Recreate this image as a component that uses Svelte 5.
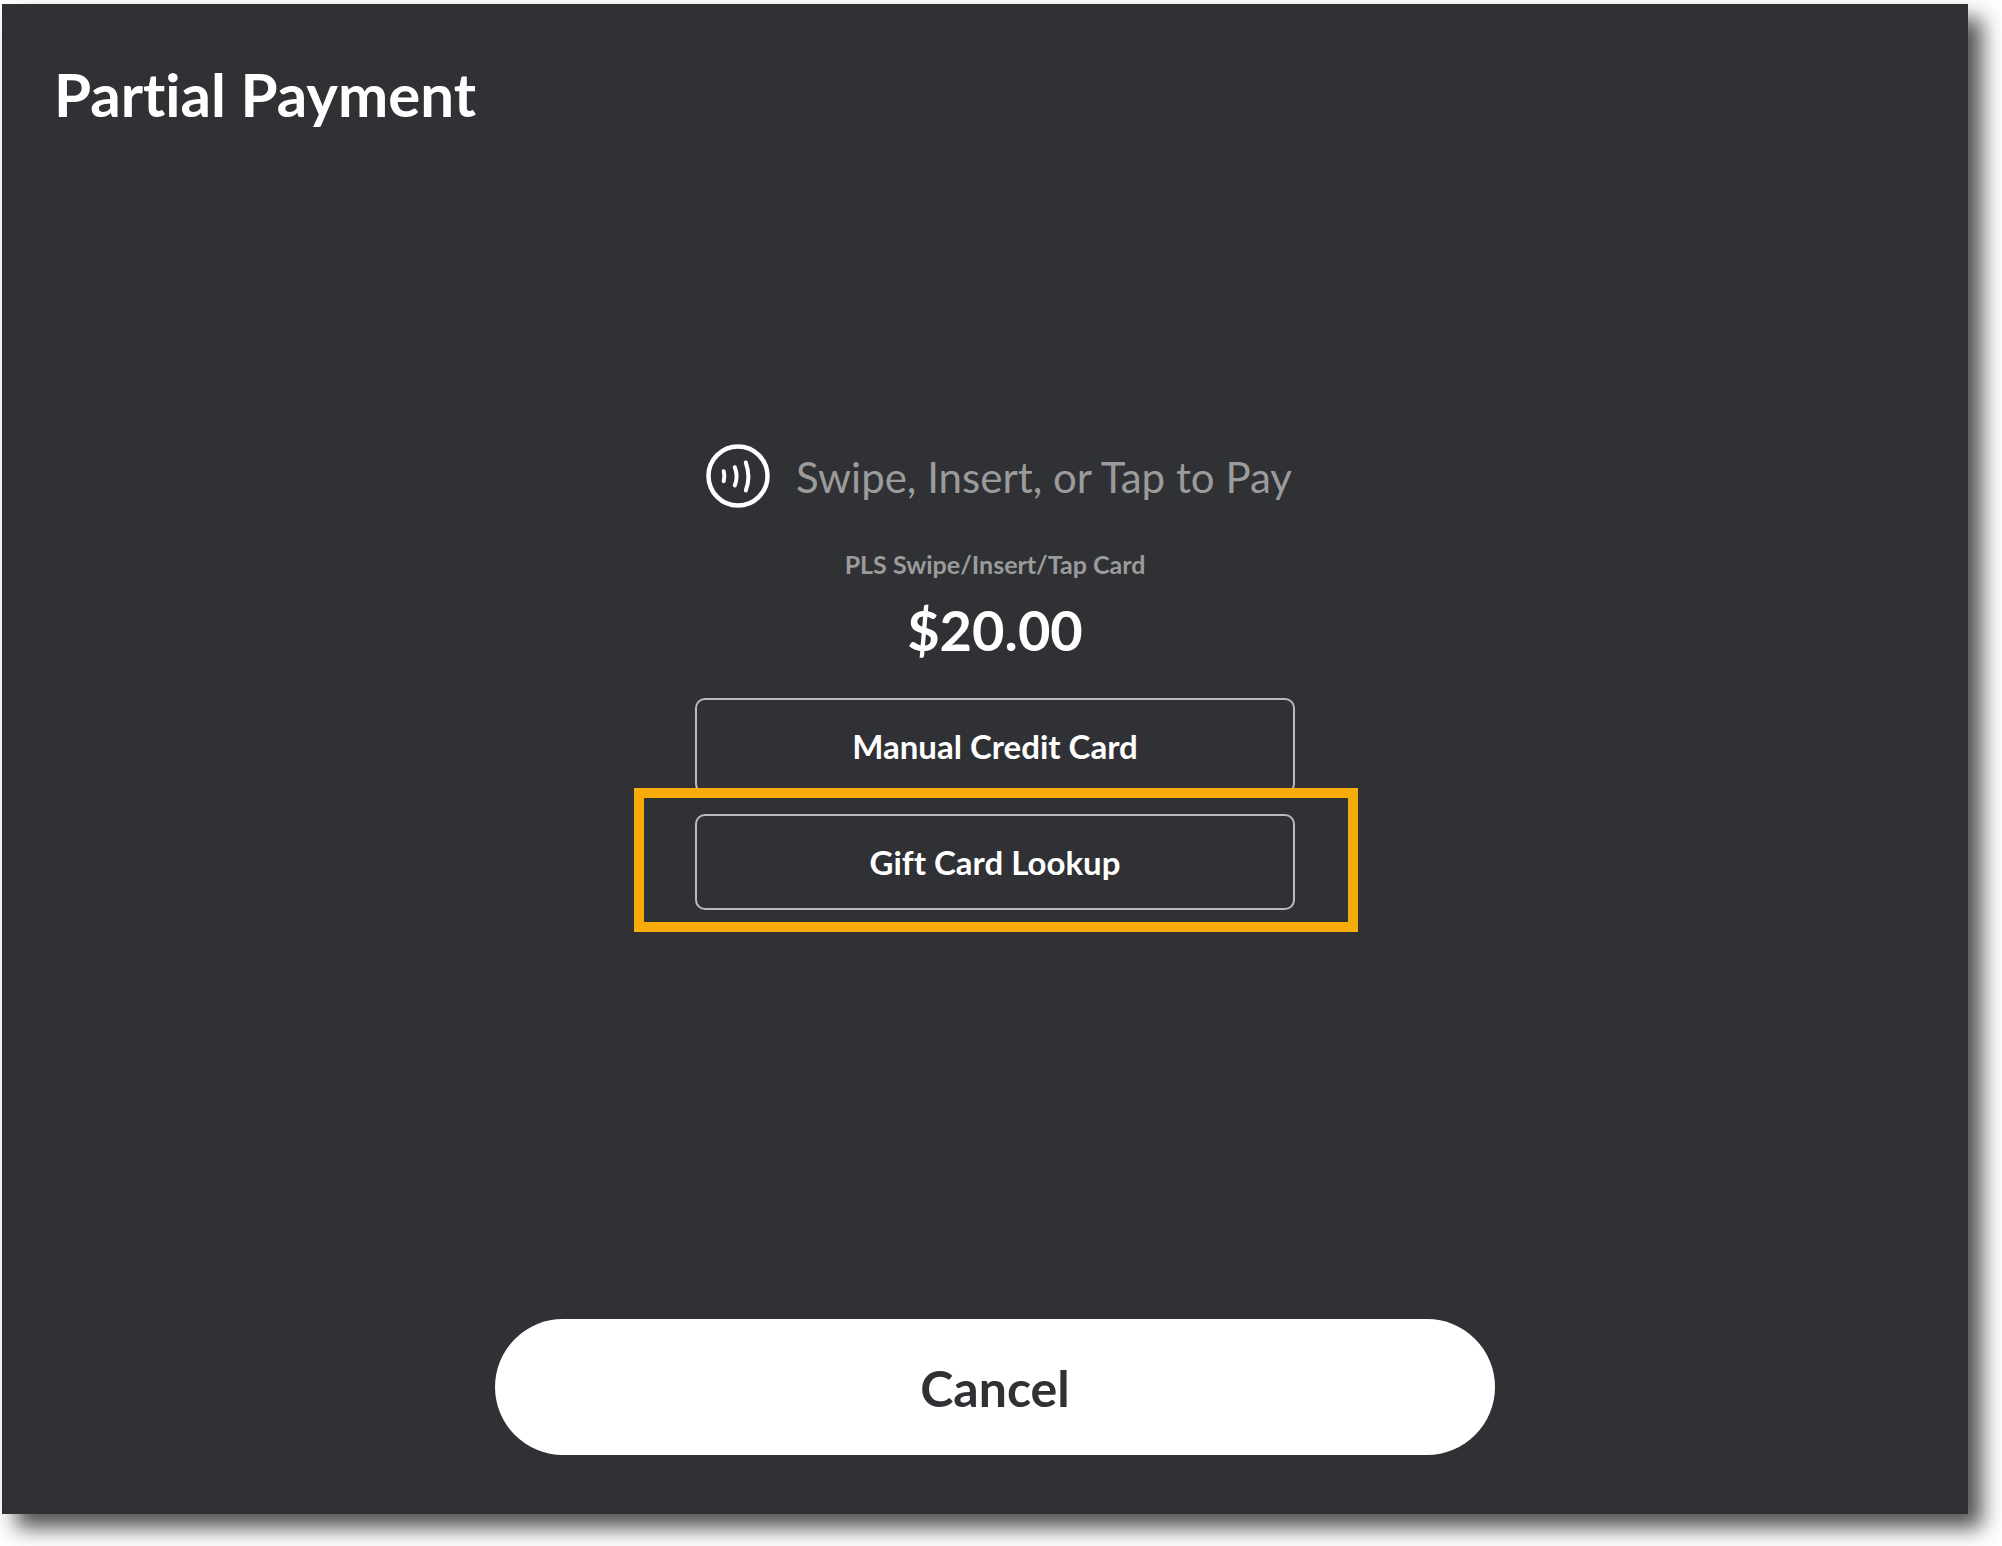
<script lang="ts">
	export let title: string = "Partial Payment";
	export let amount: number = 20;
	export let highlighted: string = "gift";

	const methods = [
		{ id: "manual", label: "Manual Credit Card" },
		{ id: "gift", label: "Gift Card Lookup" },
	];

	$: total = "$" + amount.toFixed(2);
</script>

<div class="screen">
	<header>
		<h1>{title}</h1>
	</header>

	<main>
		<div class="prompt">
			<svg class="tap-icon" viewBox="0 0 64 64" aria-hidden="true">
				<circle cx="32" cy="32" r="29.5" stroke-width="4.5" />
				<path d="M17.7 27.2q1.4 5.3 0 10" stroke-width="4" />
				<path d="M28.8 23.2q3.6 9.4 0 18.2" stroke-width="4" />
				<path d="M39.8 18.5q5.2 14.5 0 28" stroke-width="4" />
			</svg>
			<p>Swipe, Insert, or Tap to Pay</p>
		</div>
		<p class="status">PLS Swipe/Insert/Tap Card</p>
		<p class="amount">{total}</p>

		<div class="methods">
			{#each methods as method (method.id)}
				<div class="method" class:highlighted={method.id === highlighted}>
					<button type="button">{method.label}</button>
				</div>
			{/each}
		</div>
	</main>

	<footer>
		<button type="button" class="cancel">Cancel</button>
	</footer>
</div>

<style>
	:global(body) {
		background: white;
	}

	:global(#app) {
		display: flex;
		min-height: 100vh;
	}

	.screen {
		flex: 1;
		display: flex;
		flex-direction: column;
		box-sizing: border-box;
		margin: 4px 34px 32px 2px;
		padding: 58px 32px 59px 52px;
		background: #303135;
		box-shadow: 14px 14px 20px rgba(0, 0, 0, 0.68);
		color: white;
		font-family: Lato, "Open Sans", sans-serif;
		font-variant-ligatures: none;
	}

	h1,
	p {
		margin: 0;
	}

	h1 {
		font-size: 60px;
		line-height: 64px;
		font-weight: 700;
	}

	main {
		flex: 1;
		display: flex;
		flex-direction: column;
		align-items: center;
		justify-content: center;
	}

	.prompt {
		display: flex;
		align-items: center;
		gap: 26px;
		padding-left: 8px;
		color: #9b9b9b;
		font-size: 42px;
		line-height: 64px;
	}

	.prompt p {
		padding-top: 2px;
		line-height: 62px;
	}

	.tap-icon {
		width: 64px;
		height: 64px;
		flex: none;
		fill: none;
		stroke: white;
		stroke-linecap: round;
	}

	.status {
		margin-top: 40px;
		color: #9b9b9b;
		font-size: 25px;
		line-height: 32px;
		font-weight: 700;
	}

	.amount {
		margin-top: 18px;
		font-size: 56px;
		line-height: 64px;
		font-weight: 700;
	}

	.methods {
		display: flex;
		flex-direction: column;
		gap: 20px;
		width: 100%;
		max-width: 600px;
		margin-top: 36px;
	}

	.method {
		position: relative;
	}

	/* call-out frame drawn over the neighbouring button */
	.highlighted::after {
		content: "";
		position: absolute;
		inset: -26px -63px -22px -61px;
		border: 10px solid #f8ac09;
		pointer-events: none;
	}

	button {
		display: block;
		width: 100%;
		font-family: inherit;
		font-weight: 700;
		font-variant-ligatures: inherit;
		cursor: pointer;
	}

	.method button {
		padding: 28px 20px;
		border: 2px solid #b9bcba;
		border-radius: 10px;
		background: transparent;
		color: white;
		font-size: 33px;
		line-height: 36px;
	}

	footer {
		display: flex;
		justify-content: center;
		padding-top: 91px;
	}

	.cancel {
		max-width: 1000px;
		padding: 37px 40px 35px;
		border: none;
		border-radius: 68px;
		background: white;
		color: #303135;
		font-size: 50px;
		line-height: 64px;
	}
</style>
